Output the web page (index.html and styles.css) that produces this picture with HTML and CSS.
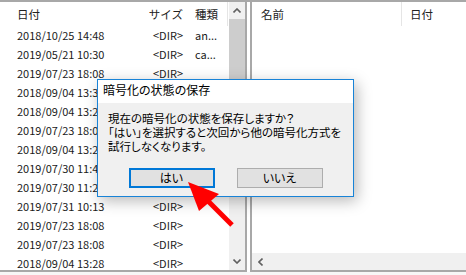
FILE: index.html
```html
<!DOCTYPE html>
<html lang="ja">
<head>
<meta charset="utf-8">
<link rel="stylesheet" href="styles.css">
</head>
<body>
<div class="screen">
  <div class="pane-left">
    <div class="list">
      <div class="row hdr"><span class="c-date">日付</span><span class="c-size">サイズ</span><span class="c-type">種類</span></div>
      <div class="row"><span class="c-date">2018/10/25 14:48</span><span class="c-size">&lt;DIR&gt;</span><span class="c-type">an...</span></div>
      <div class="row"><span class="c-date">2019/05/21 10:30</span><span class="c-size">&lt;DIR&gt;</span><span class="c-type">ca...</span></div>
      <div class="row"><span class="c-date">2019/07/23 18:08</span><span class="c-size">&lt;DIR&gt;</span><span class="c-type"></span></div>
      <div class="row"><span class="c-date">2018/09/04 13:38</span><span class="c-size">&lt;DIR&gt;</span><span class="c-type"></span></div>
      <div class="row"><span class="c-date">2018/09/04 13:28</span><span class="c-size">&lt;DIR&gt;</span><span class="c-type"></span></div>
      <div class="row"><span class="c-date">2019/07/23 18:08</span><span class="c-size">&lt;DIR&gt;</span><span class="c-type"></span></div>
      <div class="row"><span class="c-date">2018/09/04 13:28</span><span class="c-size">&lt;DIR&gt;</span><span class="c-type"></span></div>
      <div class="row"><span class="c-date">2019/07/30 11:45</span><span class="c-size">&lt;DIR&gt;</span><span class="c-type"></span></div>
      <div class="row"><span class="c-date">2019/07/30 11:22</span><span class="c-size">&lt;DIR&gt;</span><span class="c-type"></span></div>
      <div class="row"><span class="c-date">2019/07/31 10:13</span><span class="c-size">&lt;DIR&gt;</span><span class="c-type"></span></div>
      <div class="row"><span class="c-date">2019/07/23 18:08</span><span class="c-size">&lt;DIR&gt;</span><span class="c-type"></span></div>
      <div class="row"><span class="c-date">2019/07/23 18:08</span><span class="c-size">&lt;DIR&gt;</span><span class="c-type"></span></div>
      <div class="row"><span class="c-date">2018/09/04 13:28</span><span class="c-size">&lt;DIR&gt;</span><span class="c-type"></span></div>
    </div>
    <div class="vscroll">
      <div class="sb-btn"><svg width="8" height="5" viewBox="0 0 8 5"><polyline points="0.5,4.5 4,1 7.5,4.5" fill="none" stroke="#606060" stroke-width="1.6"/></svg></div>
      <div class="thumb"></div>
      <div class="track"></div>
      <div class="sb-btn"><svg width="8" height="5" viewBox="0 0 8 5"><polyline points="0.5,0.5 4,4 7.5,0.5" fill="none" stroke="#606060" stroke-width="1.6"/></svg></div>
    </div>
  </div>
  <div class="splitter"></div>
  <div class="pane-right">
    <div class="rhdr"><span class="c-name">名前</span><span class="c-rdate">日付</span></div>
    <div class="rbody"></div>
    <div class="hscroll"><div class="sb-btn"><svg width="5" height="8" viewBox="0 0 5 8"><polyline points="4.5,0.5 1,4 4.5,7.5" fill="none" stroke="#606060" stroke-width="1.6"/></svg></div></div>
  </div>
</div>

<div class="dialog">
  <div class="dlg-title">暗号化の状態の保存</div>
  <div class="dlg-body">
    <div class="dlg-line">現在の暗号化の状態を保存しますか？</div>
    <div class="dlg-line">「はい」を選択すると次回から他の暗号化方式を</div>
    <div class="dlg-line">試行しなくなります。</div>
  </div>
  <div class="dlg-buttons">
    <div class="btn default">はい</div>
    <div class="btn">いいえ</div>
  </div>
</div>

<svg class="pointer" width="466" height="275" viewBox="0 0 466 275">
  <line x1="205" y1="198" x2="232" y2="225" stroke="#f00" stroke-width="5"/>
  <polygon points="188,182 199,211 219,194" fill="#f00"/>
</svg>
</body>
</html>
```

FILE: styles.css
```css
* { box-sizing: border-box; margin: 0; padding: 0; }
html, body { width: 466px; height: 275px; overflow: hidden; }
body {
  background: #f7f7f7;
  font-family: "Noto Sans CJK JP", sans-serif;
  font-size: 11px;
  color: #1a1a1a;
  position: relative;
}
.screen {
  display: flex;
  height: 272px;
  border-top: 2px solid #a8a8a8;
}
.pane-left {
  display: flex;
  width: 247px;
  background: #fff;
  border-right: 2px solid #a8a8a8;
  border-bottom: 2px solid #a8a8a8;
}
.list { width: 229px; overflow: hidden; }
.row {
  display: grid;
  grid-template-columns: 140px 50px 38px;
  height: 19px;
  line-height: 19px;
  white-space: nowrap;
}
.row.hdr { height: 24px; line-height: 24px; color: #222; font-size: 11.5px; }
.c-date { padding-left: 17px; }
.c-size { text-align: right; padding-right: 7px; }
.c-type { padding-left: 5px; overflow: hidden; }
.hdr .c-type { border-right: 1px solid #e5e5e5; }
.vscroll {
  width: 16px;
  background: #f0f0f0;
  display: flex;
  flex-direction: column;
}
.sb-btn {
  height: 17px;
  display: flex;
  align-items: center;
  justify-content: center;
}
.thumb { height: 131px; background: #cdcdcd; }
.track { flex: 1; }
.splitter { width: 3px; background: #fff; }
.pane-right {
  flex: 1;
  display: flex;
  flex-direction: column;
  background: #fff;
  border-left: 2px solid #a8a8a8;
  border-bottom: 2px solid #a8a8a8;
}
.rhdr {
  display: grid;
  grid-template-columns: 150px 1fr;
  height: 24px;
  line-height: 24px;
  color: #222;
  font-size: 11.5px;
}
.c-name { padding-left: 9px; border-right: 1px solid #e5e5e5; }
.c-rdate { padding-left: 8px; }
.rbody { flex: 1; }
.hscroll { height: 17px; background: #f0f0f0; display: flex; }
.hscroll .sb-btn { width: 17px; }
.dialog {
  position: absolute;
  left: 97px;
  top: 79px;
  width: 257px;
  height: 118px;
  background: #f0f0f0;
  border: 1px solid #1883d7;
  box-shadow: 3px 4px 14px rgba(0, 0, 0, 0.28);
  font-feature-settings: "palt";
  font-size: 11.5px;
}
.dlg-title {
  height: 23px;
  background: #fff;
  padding-left: 5px;
  line-height: 20px;
  color: #000;
  font-size: 12px;
}
.dlg-body {
  padding: 8px 0 0 10px;
  line-height: 14px;
  color: #000;
}
.dlg-buttons {
  display: flex;
  justify-content: center;
  gap: 22px;
  margin-top: 15px;
}
.btn {
  width: 86px;
  height: 20px;
  background: #e1e1e1;
  border: 1px solid #adadad;
  text-align: center;
  line-height: 18px;
  color: #000;
  font-size: 12px;
}
.btn.default { border: 2px solid #0078d7; line-height: 16px; }
.pointer { position: absolute; left: 0; top: 0; pointer-events: none; }
```
